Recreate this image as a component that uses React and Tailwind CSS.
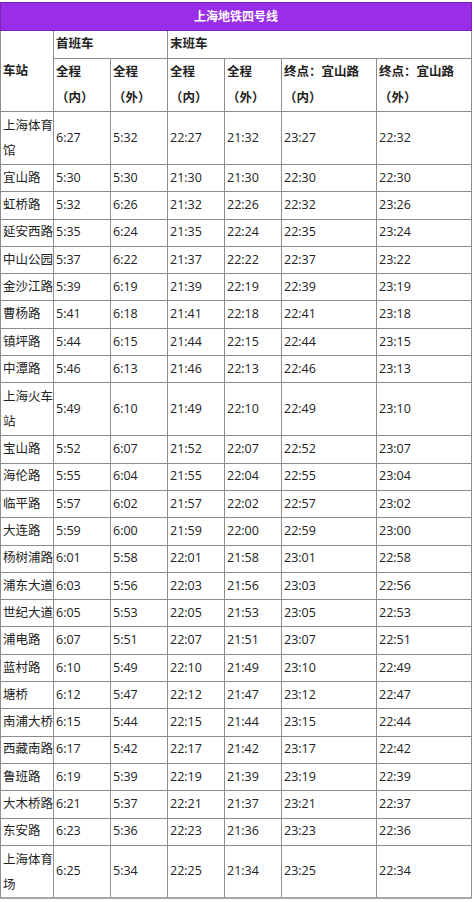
import React from "react";

const ROWS = [
  ["上海体育馆", "6:27", "5:32", "22:27", "21:32", "23:27", "22:32", true],
  ["宜山路", "5:30", "5:30", "21:30", "21:30", "22:30", "22:30"],
  ["虹桥路", "5:32", "6:26", "21:32", "22:26", "22:32", "23:26"],
  ["延安西路", "5:35", "6:24", "21:35", "22:24", "22:35", "23:24"],
  ["中山公园", "5:37", "6:22", "21:37", "22:22", "22:37", "23:22"],
  ["金沙江路", "5:39", "6:19", "21:39", "22:19", "22:39", "23:19"],
  ["曹杨路", "5:41", "6:18", "21:41", "22:18", "22:41", "23:18"],
  ["镇坪路", "5:44", "6:15", "21:44", "22:15", "22:44", "23:15"],
  ["中潭路", "5:46", "6:13", "21:46", "22:13", "22:46", "23:13"],
  ["上海火车站", "5:49", "6:10", "21:49", "22:10", "22:49", "23:10", true],
  ["宝山路", "5:52", "6:07", "21:52", "22:07", "22:52", "23:07"],
  ["海伦路", "5:55", "6:04", "21:55", "22:04", "22:55", "23:04"],
  ["临平路", "5:57", "6:02", "21:57", "22:02", "22:57", "23:02"],
  ["大连路", "5:59", "6:00", "21:59", "22:00", "22:59", "23:00"],
  ["杨树浦路", "6:01", "5:58", "22:01", "21:58", "23:01", "22:58"],
  ["浦东大道", "6:03", "5:56", "22:03", "21:56", "23:03", "22:56"],
  ["世纪大道", "6:05", "5:53", "22:05", "21:53", "23:05", "22:53"],
  ["浦电路", "6:07", "5:51", "22:07", "21:51", "23:07", "22:51"],
  ["蓝村路", "6:10", "5:49", "22:10", "21:49", "23:10", "22:49"],
  ["塘桥", "6:12", "5:47", "22:12", "21:47", "23:12", "22:47"],
  ["南浦大桥", "6:15", "5:44", "22:15", "21:44", "23:15", "22:44"],
  ["西藏南路", "6:17", "5:42", "22:17", "21:42", "23:17", "22:42"],
  ["鲁班路", "6:19", "5:39", "22:19", "21:39", "23:19", "22:39"],
  ["大木桥路", "6:21", "5:37", "22:21", "21:37", "23:21", "22:37"],
  ["东安路", "6:23", "5:36", "22:23", "21:36", "23:23", "22:36"],
  ["上海体育场", "6:25", "5:34", "22:25", "21:34", "23:25", "22:34", true],
];

const cell = "border border-[#8e8e8e] pl-[2px] align-middle";

const StationName = ({ name, tall }) =>
  tall ? (
    <span className="block leading-[25px]">
      {name.slice(0, 4)}
      <br />
      {name.slice(4)}
    </span>
  ) : (
    <span className="whitespace-nowrap">{name}</span>
  );

export default function App() {
  return (
    <div
      className="w-[474px] pt-[2px] bg-white text-[#222]"
      style={{ fontFamily: '"Open Sans", "Noto Sans CJK SC", sans-serif' }}
    >
      <table className="w-[471px] table-fixed border-collapse text-[12.5px] border-b-2 border-b-[#a8a8a8]">
        <colgroup>
          <col className="w-[53px]" />
          <col className="w-[57px]" />
          <col className="w-[57px]" />
          <col className="w-[57px]" />
          <col className="w-[57px]" />
          <col className="w-[95px]" />
          <col className="w-[95px]" />
        </colgroup>
        <thead>
          <tr className="h-[28px]">
            <th
              colSpan={7}
              className="border border-[#7624b8] bg-[#9a2ee8] text-white text-[12px] font-bold text-center align-middle"
            >
              上海地铁四号线
            </th>
          </tr>
          <tr className="h-[28px] font-bold">
            <th rowSpan={2} className={`${cell} text-left font-bold`}>
              车站
            </th>
            <th colSpan={2} className={`${cell} text-left font-bold`}>
              首班车
            </th>
            <th colSpan={4} className={`${cell} text-left font-bold`}>
              末班车
            </th>
          </tr>
          <tr className="h-[52px]">
            {["全程", "全程", "全程", "全程", "终点：宜山路", "终点：宜山路"].map((t, i) => (
              <th key={i} className={`${cell} text-left font-bold leading-[26px]`}>
                {t}
                <br />
                {i % 2 === 0 ? "（内）" : "（外）"}
              </th>
            ))}
          </tr>
        </thead>
        <tbody>
          {ROWS.map((r) => (
            <tr key={r[0]} className={r[7] ? "h-[53px]" : "h-[27.3px]"}>
              <td className={cell}>
                <StationName name={r[0]} tall={r[7]} />
              </td>
              {r.slice(1, 7).map((v, i) => (
                <td key={i} className={cell}>
                  {v}
                </td>
              ))}
            </tr>
          ))}
        </tbody>
      </table>
    </div>
  );
}
